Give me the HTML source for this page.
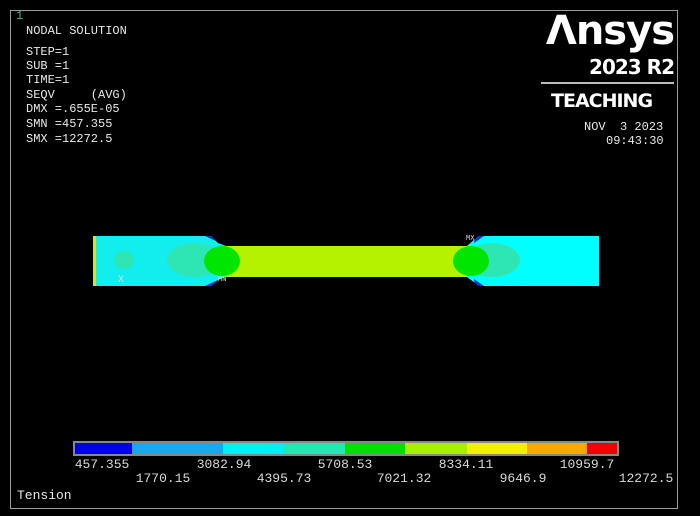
<!DOCTYPE html>
<html><head><meta charset="utf-8"><style>
html,body{margin:0;padding:0;background:#000;width:700px;height:516px;overflow:hidden}
.t{position:absolute;font-family:"Liberation Mono",monospace;font-size:12px;color:#e8e8e8;white-space:pre;line-height:12px}
.lab{position:absolute;font-family:"Liberation Mono",monospace;font-size:13px;color:#d8d8d8;white-space:pre;transform:translateX(-50%)}
</style></head><body>
<div style="position:absolute;left:10px;top:10px;width:666px;height:497px;border:1px solid #9a9a9a"></div>
<div class="t" style="left:16px;top:10px;color:#3fb89a">1</div>
<div class="t" style="left:26px;top:25px">NODAL SOLUTION</div>
<div class="t" style="left:26px;top:46px">STEP=1</div>
<div class="t" style="left:26px;top:60px">SUB =1</div>
<div class="t" style="left:26px;top:74px">TIME=1</div>
<div class="t" style="left:26px;top:89px">SEQV     (AVG)</div>
<div class="t" style="left:26px;top:103px">DMX =.655E-05</div>
<div class="t" style="left:26px;top:118px">SMN =457.355</div>
<div class="t" style="left:26px;top:133px">SMX =12272.5</div>
<div class="t" style="left:584px;top:121px">NOV  3 2023</div>
<div class="t" style="left:606px;top:135px">09:43:30</div>
<div style="position:absolute;right:26px;top:6px;font-family:'DejaVu Sans','Liberation Sans',sans-serif;font-weight:bold;font-size:40px;color:#fff;letter-spacing:-1px;line-height:50px">&#923;nsys</div>
<div style="position:absolute;right:26px;top:53px;font-family:'DejaVu Sans','Liberation Sans',sans-serif;font-weight:bold;font-size:20px;color:#fff;letter-spacing:-1px;line-height:28px">2023 R2</div>
<div style="position:absolute;left:541px;top:82px;width:133px;height:2px;background:#bbb"></div>
<div style="position:absolute;left:551px;top:89px;font-family:'DejaVu Sans','Liberation Sans',sans-serif;font-weight:bold;font-size:19px;color:#fff;letter-spacing:-1px;line-height:24px">TEACHING</div>
<svg style="position:absolute;left:0;top:0" width="700" height="516">
<defs><clipPath id="c"><path d="M93 236H211L218 243L226 246H467L474 240L479 236H599V286H479L474 282L467 277H226L218 280L211 286H93Z"/></clipPath></defs>
<g clip-path="url(#c)">
<rect x="93" y="236" width="506" height="50" fill="#12eeee"/>
<rect x="420" y="236" width="179" height="50" fill="#00ffff"/>
<ellipse cx="124" cy="260" rx="10" ry="9" fill="#2ee6b4"/>
<ellipse cx="195" cy="260" rx="28" ry="17" fill="#2ee6b4"/>
<ellipse cx="492" cy="260" rx="28" ry="17" fill="#2ee6b4"/>
<rect x="226" y="246" width="241" height="31" fill="#b4f200"/>
<ellipse cx="222" cy="261" rx="18" ry="15" fill="#00e600"/>
<ellipse cx="471" cy="261" rx="18" ry="15" fill="#00e600"/>
<rect x="93" y="236" width="3" height="50" fill="#c8e830"/>
<path d="M205 236H213L218 242ZM205 286H213L218 280ZM475 236H484L474 243ZM475 286H484L474 279Z" fill="#1030e0"/>
</g>
<text x="118" y="282" fill="#ddd" font-family="Liberation Mono" font-size="10">X</text>
<text x="466" y="240" fill="#ddd" font-family="Liberation Mono" font-size="7">MX</text>
<text x="218" y="281" fill="#ddd" font-family="Liberation Mono" font-size="7">MN</text>
<rect x="73" y="441" width="546" height="15" fill="#888"/>
<rect x="75" y="443" width="57" height="11" fill="#0000e8"/>
<rect x="132" y="443" width="91" height="11" fill="#18a8f0"/>
<rect x="223" y="443" width="61" height="11" fill="#00f0f0"/>
<rect x="284" y="443" width="61" height="11" fill="#20e8b0"/>
<rect x="345" y="443" width="60" height="11" fill="#00e000"/>
<rect x="405" y="443" width="62" height="11" fill="#a8ee00"/>
<rect x="467" y="443" width="60" height="11" fill="#f0f000"/>
<rect x="527" y="443" width="60" height="11" fill="#f8a800"/>
<rect x="587" y="443" width="30" height="11" fill="#f00000"/>
</svg>
<div class="lab" style="left:102px;top:457px">457.355</div>
<div class="lab" style="left:224px;top:457px">3082.94</div>
<div class="lab" style="left:345px;top:457px">5708.53</div>
<div class="lab" style="left:466px;top:457px">8334.11</div>
<div class="lab" style="left:587px;top:457px">10959.7</div>
<div class="lab" style="left:163px;top:471px">1770.15</div>
<div class="lab" style="left:284px;top:471px">4395.73</div>
<div class="lab" style="left:404px;top:471px">7021.32</div>
<div class="lab" style="left:523px;top:471px">9646.9</div>
<div class="lab" style="left:646px;top:471px">12272.5</div>
<div class="t" style="left:17px;top:490px;font-size:13px">Tension</div>
</body></html>
